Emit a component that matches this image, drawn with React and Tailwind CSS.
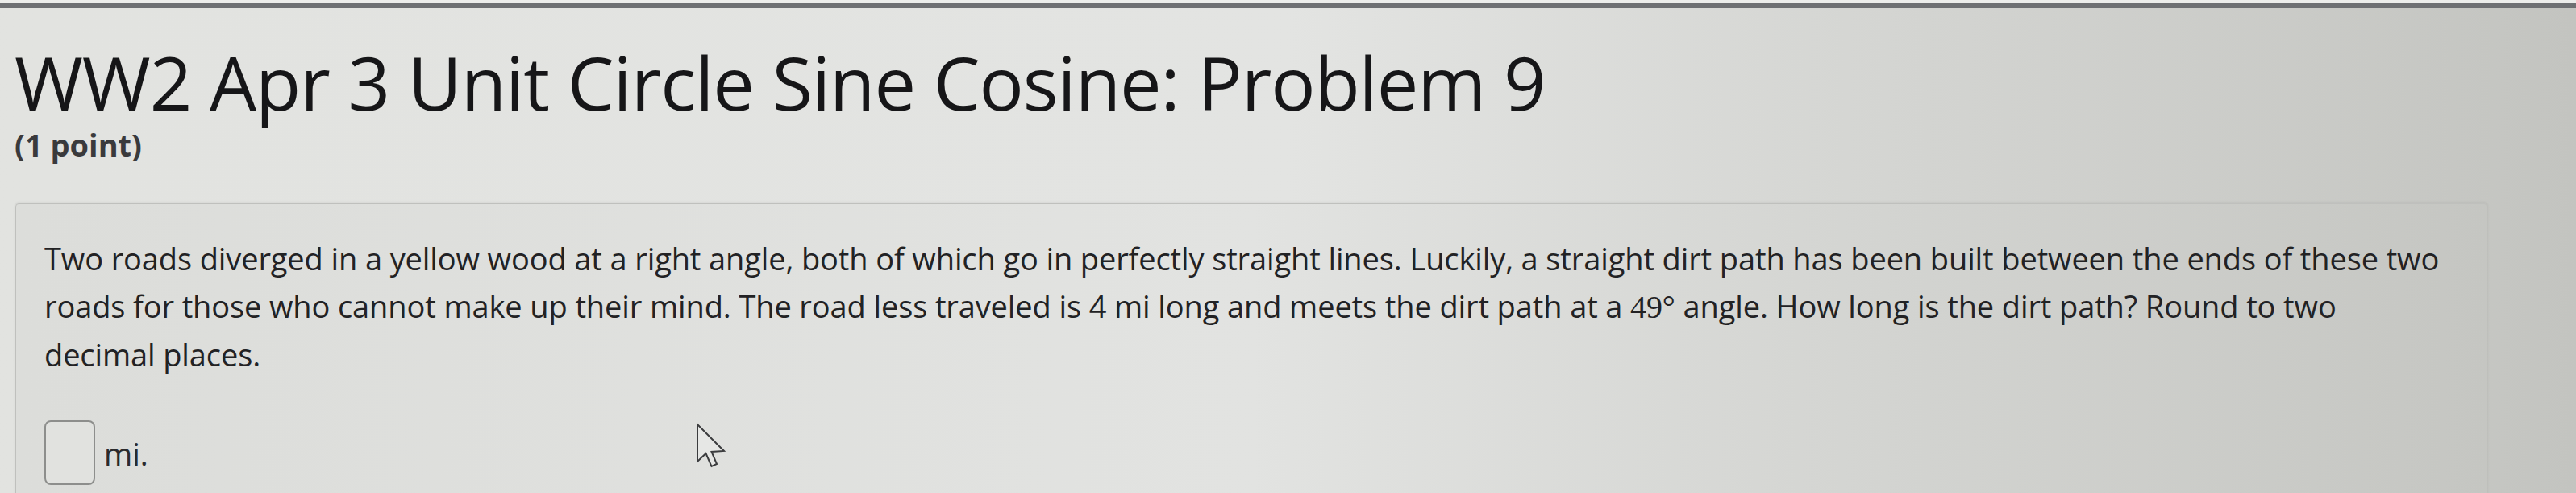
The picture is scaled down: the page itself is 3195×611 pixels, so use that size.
export default function App() {
  return (
    <div
      className="relative h-[611px] w-[3195px] overflow-hidden bg-linear-to-r from-[#e2e3e0] via-[#e3e4e2] to-[#c3c4c0] text-[#1c1c1e]"
      style={{ fontFamily: '"Open Sans", "Noto Sans", sans-serif' }}
    >
      <div className="h-[4px] bg-[#ecedeb]" />
      <div className="h-[6px] bg-[#6e7073]" />

      <div className="pl-[18px] pt-[46px]">
        <h1 className="text-[92px] leading-[92px] font-normal tracking-[-0.012em] text-[#161618]">
          WW2 Apr 3 Unit Circle Sine Cosine: Problem 9
        </h1>
        <div className="mt-[12px] text-[38px] leading-[38px] font-bold text-[#3a3a3c]">(1 point)</div>
      </div>

      <div className="mt-[54px] ml-[19px] w-[3066px] h-[400px] rounded-t-[4px] border border-[#bfc0bd] bg-linear-to-r from-[#dcddda] via-[#e2e3e1] to-[#c5c6c2] pl-[35px] pt-[38px] shadow-[0_-1px_3px_rgba(0,0,0,0.1)]">
        <p className="w-[2982px] text-[38px] leading-[59px] tracking-[-0.003em] text-[#222224]">
          Two roads diverged in a yellow wood at a right angle, both of which go in perfectly straight lines. Luckily, a
          straight dirt path has been built between the ends of these two roads for those who cannot make up their mind.
          The road less traveled is 4 mi long and meets the dirt path at a{" "}
          <span className="font-['Liberation_Serif',serif] text-[40px]">49°</span> angle. How long is the dirt path?
          Round to two decimal places.
        </p>

        <div className="mt-[52px] flex items-end gap-[11px]">
          <div className="h-[80px] w-[63px] rounded-[8px] border-2 border-[#8d8e8c] bg-[#e1e2df]" />
          <span className="mb-[20px] text-[38px] leading-[38px] text-[#2a2a2c]">mi.</span>
        </div>
      </div>

      <svg
        className="absolute left-[863px] top-[524px]"
        width="38"
        height="58"
        viewBox="0 0 38 58"
        fill="none"
      >
        <path
          d="M2 2 L2 48 L12.5 38 L19.5 54 L26 51 L19.5 36 L35 35 Z"
          fill="#e6e7e5"
          stroke="#3b3c3e"
          strokeWidth="2"
          strokeLinejoin="miter"
        />
      </svg>
    </div>
  );
}
